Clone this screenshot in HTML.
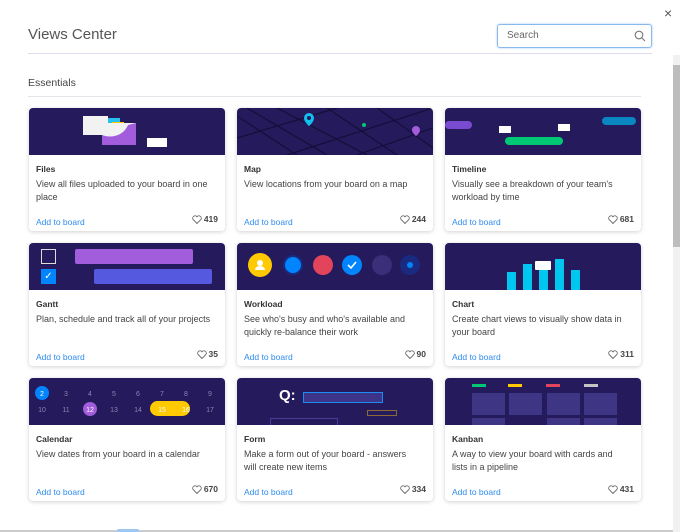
<!DOCTYPE html>
<html><head><meta charset="utf-8"><style>
*{box-sizing:border-box;margin:0;padding:0}
body{width:680px;height:532px;overflow:hidden;background:#fff;font-family:"Liberation Sans",sans-serif;position:relative;color:#333}
.abs{position:absolute}
.card{position:absolute;width:196px;height:123px;background:#fff;border-radius:4px;box-shadow:0 1px 4px rgba(0,0,0,.18);overflow:hidden}
.ban{height:47px;background:#241a5c;position:relative;overflow:hidden}
.t{position:absolute;left:7px;top:56px;font-size:8.5px;font-weight:bold;color:#333}
.d{position:absolute;left:7px;top:70px;width:175px;font-size:9px;line-height:13px;color:#444}
.a{position:absolute;left:7px;top:109px;font-size:8.5px;color:#2f8cf0}
.l{position:absolute;right:7px;top:106px;font-size:8.5px;font-weight:bold;color:#444}
.l svg{vertical-align:-2px;margin-right:2px}
</style></head><body>
<div class="abs" style="left:664px;top:5px;font-size:14px;color:#555">×</div>
<div class="abs" style="left:28px;top:26px;font-size:15px;color:#555">Views Center</div>
<div class="abs" style="left:497px;top:24px;width:155px;height:24px;border:1px solid #8ab8ec;border-radius:3px;box-shadow:0 0 2px #a8ccf4"></div>
<div class="abs" style="left:507px;top:30px;font-size:10px;color:#666">Search</div>
<svg class="abs" style="left:634px;top:30px" width="12" height="12"><circle cx="5" cy="5" r="3.8" fill="none" stroke="#777" stroke-width="1.1"/><line x1="8" y1="8" x2="11" y2="11" stroke="#777" stroke-width="1.1"/></svg>
<div class="abs" style="left:28px;top:53px;width:624px;height:1px;background:#dde"></div>
<div class="abs" style="left:673px;top:55px;width:7px;height:477px;background:#f1f1f1"></div>
<div class="abs" style="left:673px;top:65px;width:7px;height:182px;background:#bdbdbd"></div>
<div class="abs" style="left:28px;top:77px;font-size:10.5px;color:#444">Essentials</div>
<div class="abs" style="left:28px;top:96px;width:613px;height:1px;background:#e4e4ea"></div>
<div class="abs" style="left:0;top:530px;width:673px;height:2px;background:#ccc"></div>
<div class="abs" style="left:117px;top:529px;width:22px;height:3px;background:#9cc8f5;border-radius:2px"></div>

<!-- Row 1 -->
<div class="card" style="left:29px;top:108px"><div class="ban">
<div class="abs" style="left:78px;top:10px;width:13px;height:10px;background:#27c1f0"></div>
<div class="abs" style="left:83px;top:14px;width:12px;height:10px;background:#ffcb00"></div>
<div class="abs" style="left:54px;top:8px;width:25px;height:19px;background:#f2f2f2"></div>
<svg class="abs" style="left:73px;top:15px" width="36" height="24"><path d="M0 0H34V22H0Z" fill="#f2f2f2"/><path d="M0 22V12C10 16 22 12 26 2L34 0V22Z" fill="#a25ddc"/></svg>
<div class="abs" style="left:118px;top:30px;width:20px;height:9px;background:#fff"></div>
</div><div class="t">Files</div><div class="d">View all files uploaded to your board in one place</div><div class="a">Add to board</div><div class="l"><svg width="10" height="9"><path d="M5 8.5L1.2 4.6A2.2 2.2 0 0 1 5 1.8A2.2 2.2 0 0 1 8.8 4.6Z" fill="none" stroke="#666" stroke-width=".9"/></svg>419</div></div>

<div class="card" style="left:237px;top:108px"><div class="ban">
<svg width="196" height="47" style="position:absolute"><g stroke="#140f3a" stroke-width="1.2" fill="none"><path d="M0 8L60 47M10 0L90 47M40 0L130 47M90 0L160 47M140 0L196 40M0 30L100 0M50 47L196 0M120 47L196 20"/></g>
<path d="M67 10a5 5 0 0 1 10 0c0 4-5 8-5 8s-5-4-5-8z" fill="#12c0f0"/><circle cx="72" cy="10" r="2" fill="#241a5c"/>
<circle cx="127" cy="17" r="2" fill="#00c875"/><path d="M175 22a4 4 0 0 1 8 0c0 3-4 6-4 6s-4-3-4-6z" fill="#a25ddc"/></svg>
</div><div class="t">Map</div><div class="d">View locations from your board on a map</div><div class="a">Add to board</div><div class="l"><svg width="10" height="9"><path d="M5 8.5L1.2 4.6A2.2 2.2 0 0 1 5 1.8A2.2 2.2 0 0 1 8.8 4.6Z" fill="none" stroke="#666" stroke-width=".9"/></svg>244</div></div>

<div class="card" style="left:445px;top:108px"><div class="ban">
<div class="abs" style="left:0;top:13px;width:27px;height:8px;background:#784bd1;border-radius:4px"></div>
<div class="abs" style="left:157px;top:9px;width:34px;height:8px;background:#0a86c0;border-radius:4px"></div>
<div class="abs" style="left:60px;top:29px;width:58px;height:8px;background:#00c875;border-radius:4px"></div>
<div class="abs" style="left:54px;top:18px;width:12px;height:7px;background:#fff"></div>
<div class="abs" style="left:113px;top:16px;width:12px;height:7px;background:#fff"></div>
</div><div class="t">Timeline</div><div class="d">Visually see a breakdown of your team's workload by time</div><div class="a">Add to board</div><div class="l"><svg width="10" height="9"><path d="M5 8.5L1.2 4.6A2.2 2.2 0 0 1 5 1.8A2.2 2.2 0 0 1 8.8 4.6Z" fill="none" stroke="#666" stroke-width=".9"/></svg>681</div></div>

<!-- Row 2 -->
<div class="card" style="left:29px;top:243px"><div class="ban">
<div class="abs" style="left:12px;top:6px;width:15px;height:15px;border:1.5px solid #ddd"></div>
<div class="abs" style="left:12px;top:26px;width:15px;height:15px;background:#0085ff;color:#fff;font-size:10px;text-align:center;line-height:15px">✓</div>
<div class="abs" style="left:46px;top:6px;width:118px;height:15px;background:#a25ddc;border-radius:2px"></div>
<div class="abs" style="left:65px;top:26px;width:118px;height:15px;background:#5559df;border-radius:2px"></div>
</div><div class="t">Gantt</div><div class="d">Plan, schedule and track all of your projects</div><div class="a">Add to board</div><div class="l"><svg width="10" height="9"><path d="M5 8.5L1.2 4.6A2.2 2.2 0 0 1 5 1.8A2.2 2.2 0 0 1 8.8 4.6Z" fill="none" stroke="#666" stroke-width=".9"/></svg>35</div></div>

<div class="card" style="left:237px;top:243px"><div class="ban">
<svg width="196" height="47" style="position:absolute"><circle cx="23" cy="22" r="12" fill="#ffcb00"/><circle cx="23" cy="20" r="3" fill="#fff"/><path d="M18 27a5 4 0 0 1 10 0z" fill="#fff"/>
<circle cx="56" cy="22" r="9" fill="#0085ff" stroke="#1a2a80" stroke-width="2"/><circle cx="86" cy="22" r="10" fill="#e2445c"/>
<circle cx="115" cy="22" r="10" fill="#0085ff"/><path d="M111 22l3 3 5-6" stroke="#fff" stroke-width="1.6" fill="none"/>
<circle cx="145" cy="22" r="10" fill="#3a2f78"/><circle cx="173" cy="22" r="10" fill="#1a2a80"/><circle cx="173" cy="22" r="3" fill="#0085ff"/></svg>
</div><div class="t">Workload</div><div class="d">See who's busy and who's available and quickly re-balance their work</div><div class="a">Add to board</div><div class="l"><svg width="10" height="9"><path d="M5 8.5L1.2 4.6A2.2 2.2 0 0 1 5 1.8A2.2 2.2 0 0 1 8.8 4.6Z" fill="none" stroke="#666" stroke-width=".9"/></svg>90</div></div>

<div class="card" style="left:445px;top:243px"><div class="ban">
<div class="abs" style="left:62px;top:29px;width:9px;height:18px;background:#00c6f0"></div>
<div class="abs" style="left:78px;top:21px;width:9px;height:26px;background:#00c6f0"></div>
<div class="abs" style="left:94px;top:27px;width:9px;height:20px;background:#00c6f0"></div>
<div class="abs" style="left:110px;top:16px;width:9px;height:31px;background:#00c6f0"></div>
<div class="abs" style="left:126px;top:27px;width:9px;height:20px;background:#00c6f0"></div>
<div class="abs" style="left:90px;top:18px;width:16px;height:9px;background:#fff;border-radius:1px"></div>
</div><div class="t">Chart</div><div class="d">Create chart views to visually show data in your board</div><div class="a">Add to board</div><div class="l"><svg width="10" height="9"><path d="M5 8.5L1.2 4.6A2.2 2.2 0 0 1 5 1.8A2.2 2.2 0 0 1 8.8 4.6Z" fill="none" stroke="#666" stroke-width=".9"/></svg>311</div></div>

<!-- Row 3 -->
<div class="card" style="left:29px;top:378px"><div class="ban">
<svg width="196" height="47" style="position:absolute;font-family:'Liberation Sans';font-size:7px" fill="#8a86b0" text-anchor="middle">
<circle cx="13" cy="15" r="7" fill="#0085ff"/><rect x="121" y="23" width="40" height="15" rx="7.5" fill="#ffcb00"/><circle cx="61" cy="31" r="7" fill="#a25ddc"/>
<text x="13" y="18" fill="#fff">2</text><text x="37" y="18">3</text><text x="61" y="18">4</text><text x="85" y="18">5</text><text x="109" y="18">6</text><text x="133" y="18">7</text><text x="157" y="18">8</text><text x="181" y="18">9</text>
<text x="13" y="34">10</text><text x="37" y="34">11</text><text x="61" y="34" fill="#fff">12</text><text x="85" y="34">13</text><text x="109" y="34">14</text><text x="133" y="34" fill="#fff">15</text><text x="157" y="34" fill="#fff">16</text><text x="181" y="34">17</text></svg>
</div><div class="t">Calendar</div><div class="d">View dates from your board in a calendar</div><div class="a">Add to board</div><div class="l"><svg width="10" height="9"><path d="M5 8.5L1.2 4.6A2.2 2.2 0 0 1 5 1.8A2.2 2.2 0 0 1 8.8 4.6Z" fill="none" stroke="#666" stroke-width=".9"/></svg>670</div></div>

<div class="card" style="left:237px;top:378px"><div class="ban">
<div class="abs" style="left:42px;top:9px;font-size:15px;font-weight:bold;color:#fff">Q:</div>
<div class="abs" style="left:66px;top:14px;width:80px;height:11px;border:1px solid #1d8cf0;background:#3b3488"></div>
<div class="abs" style="left:130px;top:32px;width:30px;height:6px;border:1px solid #8a6a3a"></div>
<div class="abs" style="left:33px;top:40px;width:68px;height:10px;border:1px solid #4a3a9a"></div>
</div><div class="t">Form</div><div class="d">Make a form out of your board - answers will create new items</div><div class="a">Add to board</div><div class="l"><svg width="10" height="9"><path d="M5 8.5L1.2 4.6A2.2 2.2 0 0 1 5 1.8A2.2 2.2 0 0 1 8.8 4.6Z" fill="none" stroke="#666" stroke-width=".9"/></svg>334</div></div>

<div class="card" style="left:445px;top:378px"><div class="ban">
<div class="abs" style="left:27px;top:6px;width:14px;height:3px;background:#00c875"></div>
<div class="abs" style="left:63px;top:6px;width:14px;height:3px;background:#ffcb00"></div>
<div class="abs" style="left:101px;top:6px;width:14px;height:3px;background:#e2445c"></div>
<div class="abs" style="left:139px;top:6px;width:14px;height:3px;background:#c4c4c4"></div>
<div class="abs" style="left:27px;top:15px;width:33px;height:22px;background:#3f3585"></div>
<div class="abs" style="left:64px;top:15px;width:33px;height:22px;background:#3f3585"></div>
<div class="abs" style="left:102px;top:15px;width:33px;height:22px;background:#3f3585"></div>
<div class="abs" style="left:139px;top:15px;width:33px;height:22px;background:#3f3585"></div>
<div class="abs" style="left:27px;top:40px;width:33px;height:10px;background:#3f3585"></div>
<div class="abs" style="left:102px;top:40px;width:33px;height:10px;background:#3f3585"></div>
<div class="abs" style="left:139px;top:40px;width:33px;height:10px;background:#3f3585"></div>
</div><div class="t">Kanban</div><div class="d">A way to view your board with cards and lists in a pipeline</div><div class="a">Add to board</div><div class="l"><svg width="10" height="9"><path d="M5 8.5L1.2 4.6A2.2 2.2 0 0 1 5 1.8A2.2 2.2 0 0 1 8.8 4.6Z" fill="none" stroke="#666" stroke-width=".9"/></svg>431</div></div>
</body></html>
